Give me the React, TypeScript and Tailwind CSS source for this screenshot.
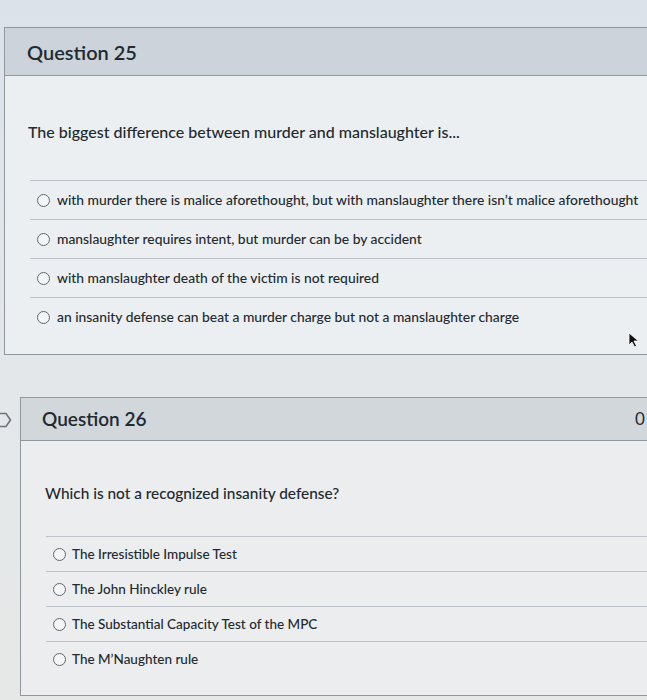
import React from 'react';

type Card = {
  title: string;
  prompt: string;
  answers: string[];
};

const q25: Card = {
  title: 'Question 25',
  prompt: 'The biggest difference between murder and manslaughter is...',
  answers: [
    'with murder there is malice aforethought, but with manslaughter there isn\u2019t malice aforethought',
    'manslaughter requires intent, but murder can be by accident',
    'with manslaughter death of the victim is not required',
    'an insanity defense can beat a murder charge but not a manslaughter charge',
  ],
};

const q26: Card = {
  title: 'Question 26',
  prompt: 'Which is not a recognized insanity defense?',
  answers: [
    'The Irresistible Impulse Test',
    'The John Hinckley rule',
    'The Substantial Capacity Test of the MPC',
    'The M\u2019Naughten rule',
  ],
};

const Radio: React.FC = () => (
  <span className="w-[13px] h-[13px] rounded-full border-[1.5px] border-[#5f6870] bg-[#f4f5f6] shrink-0" />
);

const App: React.FC = () => {
  return (
    <div
      className="relative w-[647px] h-[700px] overflow-hidden bg-gradient-to-b from-[#dbe2ea] via-[#e3e7ea] to-[#e6e8e7] text-[#22292f]"
      style={{ fontFamily: 'Lato, "Open Sans", sans-serif' }}
    >
      <div className="pt-[27px]">
        {/* question 25 */}
        <div className="ml-[4px] w-[700px] border border-[#8f989f] bg-[#eceff1]">
          <div className="h-[48px] flex items-center pl-[22px] bg-[#ccd3da] border-b border-[#8f989f] text-[20px] font-semibold">
            {q25.title}
          </div>
          <div className="pt-[44px] pb-[18px]">
            <p className="pl-[23px] text-[16px] leading-[24px] font-medium">{q25.prompt}</p>
            <ul className="mt-[36px] ml-[25px]">
              {q25.answers.map((a) => (
                <li key={a} className="h-[39px] flex items-center gap-[7px] pl-[7px] border-t border-[#b9c0c6] text-[13.85px] font-medium whitespace-nowrap">
                  <Radio />
                  <span>{a}</span>
                </li>
              ))}
            </ul>
          </div>
        </div>

        {/* question 26 */}
        <div className="mt-[42px] flex items-start">
          <svg width="12" height="16" viewBox="0 0 12 16" className="mt-[15px] shrink-0">
            <path d="M-4 1.5 H6 L10.5 8 L6 14.5 H-4" fill="none" stroke="#6b737a" strokeWidth="1.6" />
          </svg>
          <div className="ml-[8px] w-[700px] shrink-0 border border-[#8f989f] bg-[#ebedee]">
            <div className="h-[43px] flex items-center pl-[21px] bg-[#d2d7dc] border-b border-[#8f989f] text-[19px] font-semibold">
              <span>{q26.title}</span>
              <span className="ml-auto mr-[24px] w-[60px] font-normal text-[17px]">0 pts</span>
            </div>
            <div className="pt-[41px] pb-[19px]">
              <p className="pl-[24px] text-[15.4px] leading-[22px] font-medium">{q26.prompt}</p>
              <ul className="mt-[32px] ml-[25px]">
                {q26.answers.map((a) => (
                  <li key={a} className="h-[35px] flex items-center gap-[6px] pl-[7px] border-t border-[#bcc2c7] text-[13.5px] font-medium whitespace-nowrap">
                    <Radio />
                    <span>{a}</span>
                  </li>
                ))}
              </ul>
            </div>
          </div>
        </div>
      </div>

      {/* mouse pointer */}
      <svg width="12" height="16" viewBox="0 0 12 16" className="absolute left-[628px] top-[332px]">
        <path d="M1 1 L1 13 L4 10 L6.5 15 L8.5 14 L6 9 L10.5 9 Z" fill="#111" stroke="#fff" strokeWidth="0.8" />
      </svg>
    </div>
  );
};

export default App;
